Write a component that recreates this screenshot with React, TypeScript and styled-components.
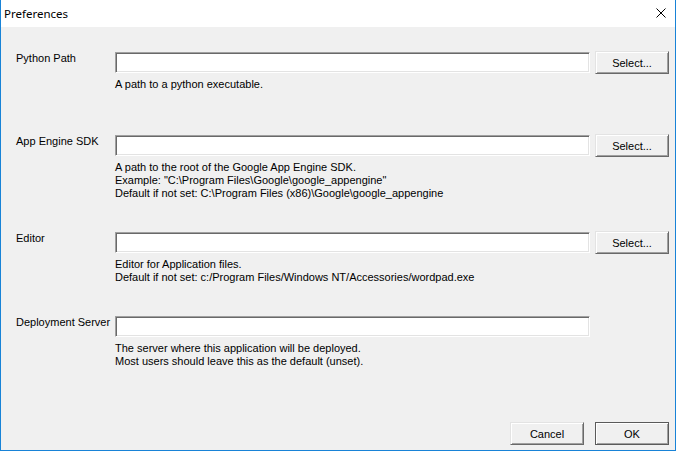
import styled, { createGlobalStyle } from "styled-components";

const GlobalStyle = createGlobalStyle`
  html, body {
    margin: 0;
    padding: 0;
    background: #f0f0f0;
  }
  * {
    box-sizing: border-box;
  }
`;

type Field = {
    label: string;
    help: string[];
    browse: boolean;
};

const fields: Field[] = [
    {
        label: "Python Path",
        help: ["A path to a python executable."],
        browse: true,
    },
    {
        label: "App Engine SDK",
        help: [
            "A path to the root of the Google App Engine SDK.",
            'Example: "C:\\Program Files\\Google\\google_appengine"',
            "Default if not set: C:\\Program Files (x86)\\Google\\google_appengine",
        ],
        browse: true,
    },
    {
        label: "Editor",
        help: [
            "Editor for Application files.",
            "Default if not set: c:/Program Files/Windows NT/Accessories/wordpad.exe",
        ],
        browse: true,
    },
    {
        label: "Deployment Server",
        help: [
            "The server where this application will be deployed.",
            "Most users should leave this as the default (unset).",
        ],
        browse: false,
    },
];

export default function App() {
    return (
        <>
            <GlobalStyle />
            <Window>
                <TitleBar>
                    <Title>Preferences</Title>
                    <CloseButton aria-label="Close">
                        <svg width="10" height="10" viewBox="0 0 10 10">
                            <path d="M0.5 0.5 L9.5 9.5 M9.5 0.5 L0.5 9.5" stroke="#000" strokeWidth="1" />
                        </svg>
                    </CloseButton>
                </TitleBar>
                <Body>
                    {fields.map((f) => (
                        <Section key={f.label}>
                            <Label>{f.label}</Label>
                            <TextInput type="text" />
                            {f.browse ? <Button>Select...</Button> : <span />}
                            <Help>
                                {f.help.map((line) => (
                                    <div key={line}>{line}</div>
                                ))}
                            </Help>
                        </Section>
                    ))}
                    <Footer>
                        <Button>Cancel</Button>
                        <Button primary>OK</Button>
                    </Footer>
                </Body>
            </Window>
        </>
    );
}

const Window = styled.div`
  width: 676px;
  height: 451px;
  display: flex;
  flex-direction: column;
  border: 1px solid #1883d7;
  border-top: none;
  background: #f0f0f0;
  font-family: "Liberation Sans", Arial, sans-serif;
  font-size: 11px;
  color: #000;
`;

const TitleBar = styled.div`
  height: 27px;
  flex: none;
  display: flex;
  align-items: center;
  justify-content: space-between;
  background: #fff;
  padding: 0 9px 1px 3px;
`;

const Title = styled.span`
  font-family: "Noto Sans", "Liberation Sans", sans-serif;
  font-size: 11.5px;
`;

const CloseButton = styled.div`
  width: 10px;
  height: 10px;
  display: flex;
`;

const Body = styled.div`
  flex: 1;
  display: flex;
  flex-direction: column;
  padding: 24px 6px 5px 15px;
`;

const Section = styled.div`
  display: grid;
  grid-template-columns: 94px 475px 74px;
  grid-template-rows: 23px auto;
  column-gap: 5px;
  min-height: 83px;
  padding-bottom: 31px;
  align-content: start;
`;

const Label = styled.div`
  line-height: 13px;
  padding-top: 1px;
  white-space: nowrap;
`;

const TextInput = styled.input`
  align-self: center;
  width: 475px;
  height: 21px;
  margin: 0;
  padding: 0 3px;
  background: #fff;
  border-top: 1px solid #a0a0a0;
  border-left: 1px solid #a0a0a0;
  border-bottom: 1px solid #fff;
  border-right: 1px solid #fff;
  box-shadow: inset 1px 1px 0 #696969, inset -1px -1px 0 #e3e3e3;
  outline: none;
  font: inherit;
`;

const Button = styled.button<{ primary?: boolean }>`
  width: 74px;
  height: 23px;
  margin: 0;
  padding: 0;
  background: #f0f0f0;
  border-style: solid;
  border-width: 1px;
  border-color: ${({ primary }) =>
        primary ? "#5a5a5a" : "#e3e3e3 #696969 #696969 #e3e3e3"};
  box-shadow: inset 1px 1px 0 #fff, inset -1px -1px 0 #a0a0a0;
  font: inherit;
  color: #000;
`;

const Help = styled.div`
  grid-column: 2 / 4;
  margin-top: 4px;
  line-height: 13px;
  white-space: nowrap;
`;

const Footer = styled.div`
  margin-top: auto;
  display: flex;
  justify-content: flex-end;
  gap: 11px;
`;
